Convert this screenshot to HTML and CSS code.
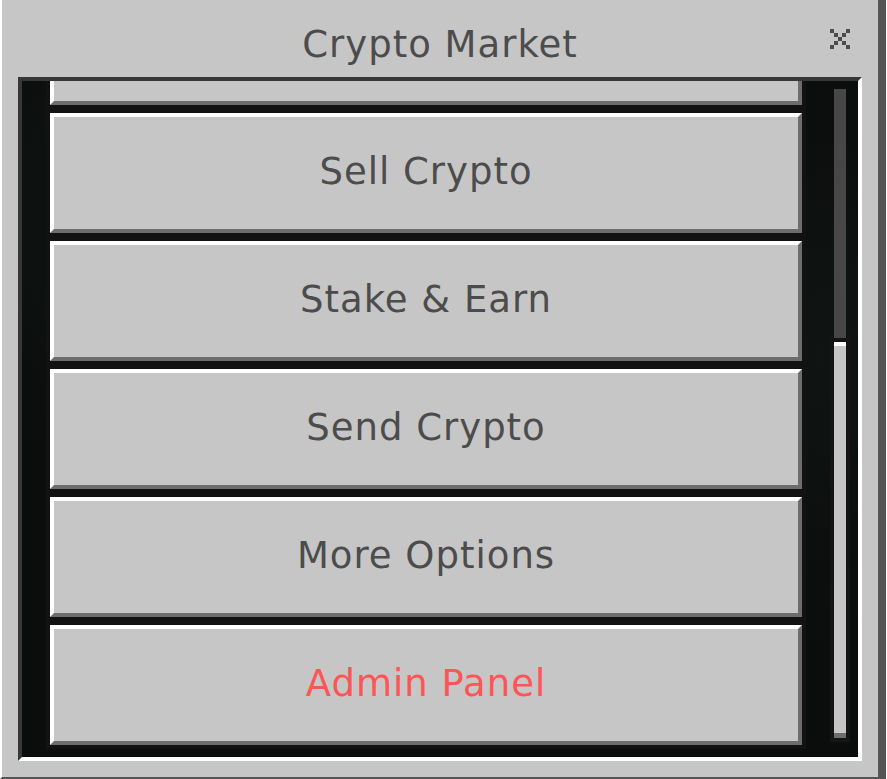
FILE: index.html
```html
<!DOCTYPE html>
<html lang="en">

<head>
    <meta charset="UTF-8">
    <meta name="viewport" content="width=device-width, initial-scale=1.0">
    <title>Crypto Market</title>
    <link rel="stylesheet" href="styles.css">
</head>

<body>
    <div class="form">
        <div class="form-header">
            <h1 class="form-title">Crypto Market</h1>
            <button class="close-btn" type="button" aria-label="Close">
                <!-- pixel cross, 4px blocks -->
                <svg width="20" height="20" viewBox="0 0 20 20">
                    <g fill="#4c4c4c">
                        <rect x="0" y="0" width="4" height="4" />
                        <rect x="16" y="0" width="4" height="4" />
                        <rect x="4" y="4" width="4" height="4" />
                        <rect x="12" y="4" width="4" height="4" />
                        <rect x="8" y="8" width="4" height="4" />
                        <rect x="4" y="12" width="4" height="4" />
                        <rect x="12" y="12" width="4" height="4" />
                        <rect x="0" y="16" width="4" height="4" />
                        <rect x="16" y="16" width="4" height="4" />
                    </g>
                </svg>
            </button>
        </div>

        <div class="form-body">
            <div class="button-list">
                <div class="buttons">
                    <!-- scrolled past: only the bottom edge shows -->
                    <div class="btn-wrap"><button class="btn" type="button" aria-label="Buy Crypto"></button></div>
                    <div class="btn-wrap"><button class="btn" type="button">Sell Crypto</button></div>
                    <div class="btn-wrap"><button class="btn" type="button">Stake &amp; Earn</button></div>
                    <div class="btn-wrap"><button class="btn" type="button">Send Crypto</button></div>
                    <div class="btn-wrap"><button class="btn" type="button">More Options</button></div>
                    <div class="btn-wrap"><button class="btn btn-admin" type="button">Admin Panel</button></div>
                </div>
            </div>
            <div class="scrollbar">
                <div class="scrollbar-thumb"></div>
            </div>
        </div>
    </div>
</body>

</html>
```

FILE: styles.css
```css
body {
    margin: 0;
    padding: 0;
    background-color: #ffffff;
    font-family: 'DejaVu Sans', sans-serif;
}

.form {
    box-sizing: border-box;
    width: 886px;
    height: 779px;
    background-color: #c6c6c6;
    border-left: 2px solid #ffffff;
    border-right: 8px solid #555555;
    border-bottom: 2px solid #555555;
}

.form-header {
    display: grid;
    grid-template-columns: 1fr auto 1fr;
    align-items: center;
    height: 77px;
}

.form-title {
    grid-column: 2;
    margin: 0;
    padding-top: 12px;
    font-size: 37px;
    font-weight: normal;
    letter-spacing: 1px;
    color: #4c4c4c;
}

.close-btn {
    grid-column: 3;
    justify-self: end;
    display: flex;
    margin: 0 28px 0 0;
    padding: 0;
    border: none;
    background: none;
    cursor: pointer;
}

/* sunken area holding the buttons */
.form-body {
    box-sizing: border-box;
    display: flex;
    height: 684px;
    margin: 0 16px;
    border-style: solid;
    border-width: 4px;
    border-color: #373737 #ffffff #ffffff #373737;
    background-color: #0b0c0c;
    background-image:
        radial-gradient(ellipse 180px 260px at 10% 20%, rgba(30, 60, 45, 0.18), transparent),
        radial-gradient(ellipse 140px 300px at 96% 40%, rgba(40, 70, 55, 0.15), transparent);
}

.button-list {
    width: 760px;
    margin-left: 24px;
    overflow: hidden;
}

.buttons {
    margin-top: -100px;
}

.btn-wrap {
    border: 4px solid #121212;
}

.btn {
    box-sizing: border-box;
    display: flex;
    align-items: center;
    justify-content: center;
    width: 100%;
    height: 120px;
    margin: 0;
    padding: 0 0 4px;
    border-style: solid;
    border-width: 4px;
    border-color: #ffffff #6d6d6d #6d6d6d #ffffff;
    background-color: #c6c6c6;
    font-family: 'DejaVu Sans', sans-serif;
    font-size: 37px;
    letter-spacing: 1px;
    color: #4c4c4c;
    cursor: pointer;
}

.btn-admin {
    color: #ff5555;
}

.scrollbar {
    display: flex;
    flex-direction: column;
    width: 12px;
    margin: 8px 0 19px 28px;
    background-color: #474747;
}

.scrollbar-thumb {
    box-sizing: border-box;
    height: 396px;
    margin-top: auto;
    border-top: 4px solid #ffffff;
    border-bottom: 5px solid #6d6d6d;
    background-color: #c6c6c6;
    box-shadow: 0 0 0 4px #141414;
}
```
